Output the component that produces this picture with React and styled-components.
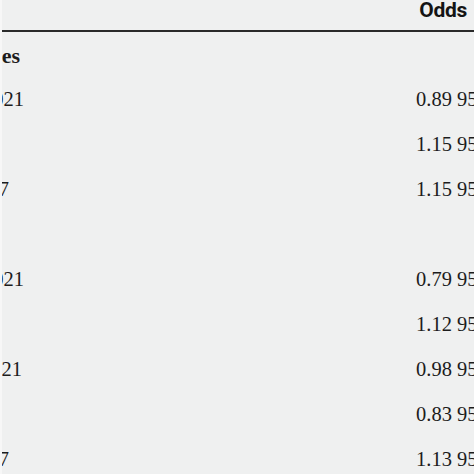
import React from 'react';
import styled, { createGlobalStyle } from 'styled-components';

const GlobalStyle = createGlobalStyle`
	html, body {
		margin: 0;
		padding: 0;
		background-color: #eff0f0;
	}
	body {
		font-family: 'Liberation Serif', 'Times New Roman', serif;
		color: #1c1c1c;
	}
`;

const Page = styled.main`
	width: 474px;
	height: 474px;
	overflow: hidden;
	background-color: #eff0f0;
	border-left: 2px solid #f7f7f7;
	box-sizing: border-box;
`;

const HeaderRow = styled.div`
	display: flex;
	justify-content: flex-end;
	align-items: flex-end;
	height: 32px;
	padding-right: 7px;
	border-bottom: 2px solid #2a2a2a;
	box-sizing: border-box;
`;

const HeaderCell = styled.span`
	font-family: Roboto, 'Liberation Sans', sans-serif;
	font-weight: 700;
	font-size: 21px;
	line-height: 24px;
	letter-spacing: -0.3px;
	padding-bottom: 8px;
	color: #141414;
`;

const Row = styled.div`
	display: grid;
	grid-template-columns: 414px 1fr;
	height: 45px;
	align-items: center;
	font-size: 20.5px;
	line-height: 23px;
	white-space: nowrap;
`;

const SectionRow = styled(Row)`
	font-weight: 700;
	font-size: 22px;
	align-items: start;
	padding-top: 12px;
	box-sizing: border-box;
`;

const Label = styled.div`
	width: ${({ end }) => end}px;
	display: flex;
	justify-content: flex-end;
	overflow: hidden;
`;

const Value = styled.div`
	overflow: hidden;
`;

const rows = [
	{ label: '2021', end: 22, value: '0.89 95% CI' },
	{ label: '', end: 0, value: '1.15 95% CI' },
	{ label: '2017', end: 7, value: '1.15 95% CI' },
	{ label: '', end: 0, value: '' },
	{ label: '2021', end: 22, value: '0.79 95% CI' },
	{ label: '', end: 0, value: '1.12 95% CI' },
	{ label: '2021', end: 20, value: '0.98 95% CI' },
	{ label: '', end: 0, value: '0.83 95% CI' },
	{ label: '2017', end: 7, value: '1.13 95% CI' },
];

const App = () => (
	<Page>
		<GlobalStyle />
		<HeaderRow>
			<HeaderCell>Odds</HeaderCell>
		</HeaderRow>
		<SectionRow>
			<Label end={18}>Outcomes</Label>
			<Value />
		</SectionRow>
		{rows.map((row, index) => (
			<Row key={index}>
				<Label end={row.end}>{row.label}</Label>
				<Value>{row.value}</Value>
			</Row>
		))}
	</Page>
);

export default App;
